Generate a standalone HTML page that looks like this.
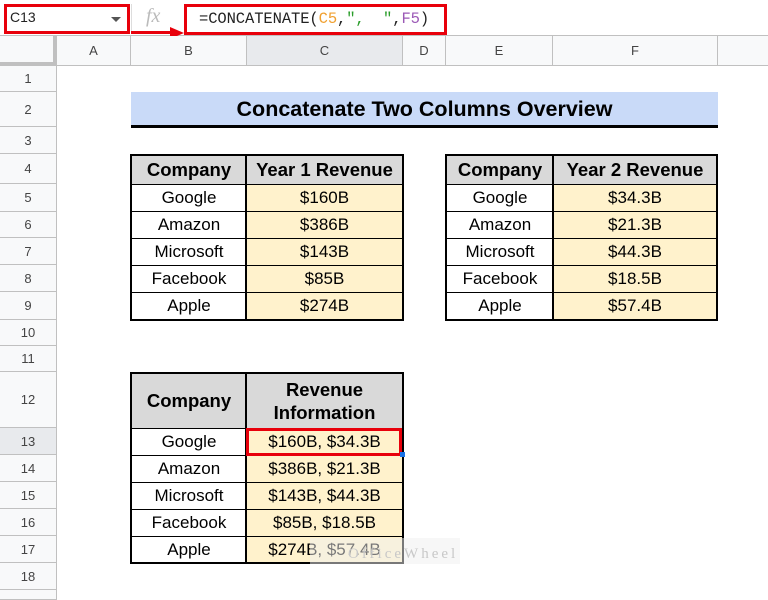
<!DOCTYPE html>
<html><head><meta charset="utf-8"><style>
*{margin:0;padding:0;box-sizing:border-box}
body{width:768px;height:595px;overflow:hidden;background:#fff;font-family:"Liberation Sans",Arial,sans-serif;position:relative}
.a{position:absolute}
.ch{position:absolute;top:36px;height:30px;background:#f8f9fa;border-right:1px solid #c0c0c0;border-bottom:1px solid #c0c0c0;color:#444;font-size:13px;text-align:center;line-height:30px}
.rh{position:absolute;left:0;width:57px;background:#f8f9fa;border-bottom:1px solid #c0c0c0;border-right:1px solid #c0c0c0;color:#444;font-size:13px;text-align:center;display:flex;align-items:center;justify-content:center}
.c{position:absolute;font-size:17px;color:#000;display:flex;align-items:center;justify-content:center;text-align:center;border:1px solid #000}
.h{background:#d9d9d9;font-weight:bold;font-size:18.5px}
.y{background:#fff2cc}
</style></head><body>
<div class="a" style="left:0;top:0;width:768px;height:36px;background:#fff;border-bottom:1px solid #c0c0c0"></div>
<div class="a" style="left:4px;top:4px;width:126px;height:30px;border:3px solid #e8000b"></div>
<div class="a" style="left:10px;top:9px;font-size:14px;color:#222">C13</div>
<div class="a" style="left:111px;top:17px;width:0;height:0;border-left:5px solid transparent;border-right:5px solid transparent;border-top:5px solid #555"></div>
<div class="a" style="left:131px;top:4px;width:1px;height:30px;background:#ddd"></div>
<div class="a" style="left:146px;top:5px;font-size:20px;font-style:italic;color:#bbb;font-family:'Liberation Serif',serif">fx</div>
<div class="a" style="left:184px;top:4px;width:263px;height:31px;border:3px solid #e8000b"></div>
<div class="a" style="left:199px;top:10px;font-size:15.5px;color:#222;font-family:'Liberation Mono',monospace;letter-spacing:-0.1px;white-space:pre">=CONCATENATE(<span style="color:#f0a030">C5</span>,<span style="color:#2a9d2a">",  "</span>,<span style="color:#9b59b6">F5</span>)</div>
<div class="a" style="left:131px;top:31px;width:42px;height:3px;background:#e8000b"></div>
<div class="a" style="left:170px;top:27px;width:0;height:0;border-top:6px solid transparent;border-bottom:6px solid transparent;border-left:14px solid #e8000b"></div>

<div class="ch" style="left:0;width:57px;border-right:4px solid #c0c0c0;border-bottom:4px solid #c0c0c0"></div>
<div class="ch" style="left:57px;width:74px">A</div>
<div class="ch" style="left:131px;width:116px">B</div>
<div class="ch" style="left:247px;width:156px;background:#e8eaed">C</div>
<div class="ch" style="left:403px;width:43px">D</div>
<div class="ch" style="left:446px;width:107px">E</div>
<div class="ch" style="left:553px;width:165px">F</div>
<div class="ch" style="left:718px;width:60px"></div>

<div class="rh" style="top:66px;height:26px">1</div>
<div class="rh" style="top:92px;height:35px">2</div>
<div class="rh" style="top:127px;height:27px">3</div>
<div class="rh" style="top:154px;height:30px">4</div>
<div class="rh" style="top:184px;height:28px">5</div>
<div class="rh" style="top:212px;height:26px">6</div>
<div class="rh" style="top:238px;height:27px">7</div>
<div class="rh" style="top:265px;height:27px">8</div>
<div class="rh" style="top:292px;height:28px">9</div>
<div class="rh" style="top:320px;height:26px">10</div>
<div class="rh" style="top:346px;height:26px">11</div>
<div class="rh" style="top:372px;height:56px">12</div>
<div class="rh" style="top:428px;height:27px;background:#e8eaed">13</div>
<div class="rh" style="top:455px;height:27px">14</div>
<div class="rh" style="top:482px;height:27px">15</div>
<div class="rh" style="top:509px;height:27px">16</div>
<div class="rh" style="top:536px;height:27px">17</div>
<div class="rh" style="top:563px;height:27px">18</div>
<div class="rh" style="top:590px;height:10px"></div>

<div class="a" style="left:131px;top:92px;width:587px;height:36px;background:#c9daf8;border-bottom:3px solid #000;font-weight:bold;font-size:21.5px;text-align:center;line-height:35px">Concatenate Two Columns Overview</div>

<!-- table 1 -->
<div class="c h" style="left:131px;top:155px;width:116px;height:30px">Company</div>
<div class="c h" style="left:246px;top:155px;width:157px;height:30px">Year 1 Revenue</div>
<div class="c" style="left:131px;top:184px;width:116px;height:28px">Google</div><div class="c y" style="left:246px;top:184px;width:157px;height:28px">$160B</div>
<div class="c" style="left:131px;top:211px;width:116px;height:28px">Amazon</div><div class="c y" style="left:246px;top:211px;width:157px;height:28px">$386B</div>
<div class="c" style="left:131px;top:238px;width:116px;height:28px">Microsoft</div><div class="c y" style="left:246px;top:238px;width:157px;height:28px">$143B</div>
<div class="c" style="left:131px;top:265px;width:116px;height:28px">Facebook</div><div class="c y" style="left:246px;top:265px;width:157px;height:28px">$85B</div>
<div class="c" style="left:131px;top:292px;width:116px;height:28px">Apple</div><div class="c y" style="left:246px;top:292px;width:157px;height:28px">$274B</div>
<div class="a" style="left:130px;top:154px;width:274px;height:167px;border:2px solid #000"></div>
<div class="a" style="left:245px;top:154px;width:2px;height:167px;background:#000"></div>

<!-- table 2 -->
<div class="c h" style="left:446px;top:155px;width:108px;height:30px">Company</div>
<div class="c h" style="left:553px;top:155px;width:164px;height:30px">Year 2 Revenue</div>
<div class="c" style="left:446px;top:184px;width:108px;height:28px">Google</div><div class="c y" style="left:553px;top:184px;width:164px;height:28px">$34.3B</div>
<div class="c" style="left:446px;top:211px;width:108px;height:28px">Amazon</div><div class="c y" style="left:553px;top:211px;width:164px;height:28px">$21.3B</div>
<div class="c" style="left:446px;top:238px;width:108px;height:28px">Microsoft</div><div class="c y" style="left:553px;top:238px;width:164px;height:28px">$44.3B</div>
<div class="c" style="left:446px;top:265px;width:108px;height:28px">Facebook</div><div class="c y" style="left:553px;top:265px;width:164px;height:28px">$18.5B</div>
<div class="c" style="left:446px;top:292px;width:108px;height:28px">Apple</div><div class="c y" style="left:553px;top:292px;width:164px;height:28px">$57.4B</div>
<div class="a" style="left:445px;top:154px;width:273px;height:167px;border:2px solid #000"></div>
<div class="a" style="left:552px;top:154px;width:2px;height:167px;background:#000"></div>

<!-- table 3 -->
<div class="c h" style="left:131px;top:373px;width:116px;height:56px">Company</div>
<div class="c h" style="left:246px;top:373px;width:157px;height:56px;line-height:23px">Revenue<br>Information</div>
<div class="c" style="left:131px;top:428px;width:116px;height:28px">Google</div><div class="c y" style="left:246px;top:428px;width:157px;height:28px">$160B, $34.3B</div>
<div class="c" style="left:131px;top:455px;width:116px;height:28px">Amazon</div><div class="c y" style="left:246px;top:455px;width:157px;height:28px">$386B, $21.3B</div>
<div class="c" style="left:131px;top:482px;width:116px;height:28px">Microsoft</div><div class="c y" style="left:246px;top:482px;width:157px;height:28px">$143B, $44.3B</div>
<div class="c" style="left:131px;top:509px;width:116px;height:28px">Facebook</div><div class="c y" style="left:246px;top:509px;width:157px;height:28px">$85B, $18.5B</div>
<div class="c" style="left:131px;top:536px;width:116px;height:27px">Apple</div><div class="c y" style="left:246px;top:536px;width:157px;height:27px">$274B, $57.4B</div>
<div class="a" style="left:130px;top:372px;width:274px;height:192px;border:2px solid #000"></div>
<div class="a" style="left:245px;top:372px;width:2px;height:192px;background:#000"></div>
<div class="a" style="left:246px;top:428px;width:156px;height:28px;border:3px solid #e8000b"></div>
<div class="a" style="left:400px;top:452px;width:5px;height:5px;background:#1a73e8"></div>

<div class="a" style="left:310px;top:538px;width:150px;height:26px;background:rgba(240,240,240,0.5)"></div>
<div class="a" style="left:348px;top:546px;font-size:15px;letter-spacing:3px;color:#c8c8c8;font-family:'Liberation Serif',serif">OfficeWheel</div>
</body></html>
